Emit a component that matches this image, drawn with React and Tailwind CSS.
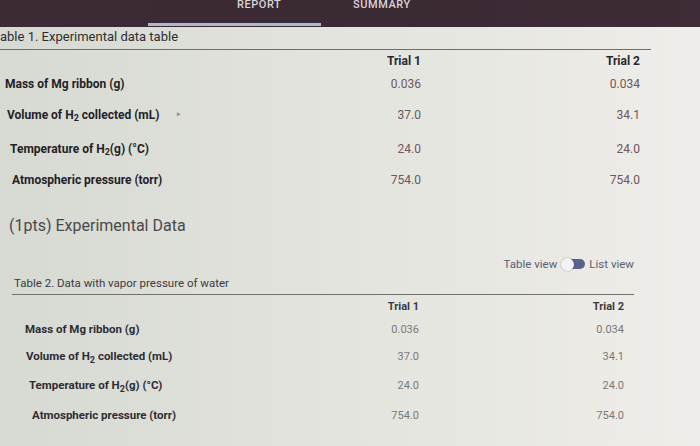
import React from "react";

const table1 = [
  { label: "Mass of Mg ribbon (g)", t1: "0.036", t2: "0.034", pl: "pl-[5px]", h: "h-[26px]" },
  { label: "Volume of H₂ collected (mL)", t1: "37.0", t2: "34.1", pl: "pl-[7px]", h: "h-[36px]", mark: true },
  { label: "Temperature of H₂(g) (°C)", t1: "24.0", t2: "24.0", pl: "pl-[10px]", h: "h-[32px]" },
  { label: "Atmospheric pressure (torr)", t1: "754.0", t2: "754.0", pl: "pl-[12px]", h: "h-[30px]" },
];

const table2 = [
  { label: "Mass of Mg ribbon (g)", t1: "0.036", t2: "0.034", pl: "pl-[25px]", h: "h-[24px]" },
  { label: "Volume of H₂ collected (mL)", t1: "37.0", t2: "34.1", pl: "pl-[26px]", h: "h-[30px]" },
  { label: "Temperature of H₂(g) (°C)", t1: "24.0", t2: "24.0", pl: "pl-[29px]", h: "h-[28px]" },
  { label: "Atmospheric pressure (torr)", t1: "754.0", t2: "754.0", pl: "pl-[32px]", h: "h-[32px]" },
];

function Label({ text }) {
  const parts = text.split("₂");
  if (parts.length === 1) return <>{text}</>;
  return (
    <>
      {parts[0]}
      <sub className="text-[9px]">2</sub>
      {parts[1]}
    </>
  );
}

export default function App() {
  return (
    <div
      className="w-[700px] h-[446px] overflow-hidden bg-gradient-to-r from-[#d6dad2] via-[#e3e4de] to-[#efede9] text-[#2e2a2e]"
      style={{ fontFamily: "Roboto, 'Liberation Sans', sans-serif" }}
    >
      {/* top tabs */}
      <div className="h-[27px] bg-gradient-to-r from-[#3d2b34] via-[#3a2a34] to-[#3e2b36] flex items-start pl-[148px]">
        <div className="w-[173px] h-full flex flex-col justify-between">
          <div className="pl-[89px] -mt-[3px] text-[11px] tracking-wider text-[#d9d3dc] font-medium">REPORT</div>
          <div className="h-[3px] bg-[#a9b9d2] mb-[1px]" />
        </div>
        <div className="ml-[32px] -mt-[3px] text-[11px] tracking-wider text-[#d9d3dc] font-medium">SUMMARY</div>
      </div>

      {/* table 1 */}
      <div className="pt-0 text-[13px] text-[#2f2c30]">able 1. Experimental data table</div>
      <div className="mt-[2px] w-[651px] h-[1px] bg-[#6f6e6e]" />
      <div className="flex items-center h-[20px] mt-[1px] text-[12px] font-bold text-[#2b2730]">
        <div className="w-[380px]" />
        <div className="w-[41px] text-right">Trial 1</div>
        <div className="w-[219px] text-right">Trial 2</div>
      </div>
      {table1.map((r) => (
        <div key={r.label} className={`flex items-center ${r.h} text-[12px]`}>
          <div className={`w-[380px] ${r.pl} font-bold text-[#231f26] flex items-center`}>
            <span className="w-[165px] whitespace-nowrap">
              <Label text={r.label} />
            </span>
            {r.mark && <span className="text-[7px] text-[#9a8f95] ml-[5px]">▸</span>}
          </div>
          <div className="w-[41px] text-right text-[#6e5560]">{r.t1}</div>
          <div className="w-[219px] text-right text-[#6e5560]">{r.t2}</div>
        </div>
      ))}

      {/* section heading */}
      <div className="mt-[19px] pl-[9px] text-[16px] text-[#4a474b]">(1pts) Experimental Data</div>

      <div className="mt-[18px] flex items-center justify-end pr-[66px] text-[11.5px] text-[#5a5e74]">
        <span>Table view</span>
        <span className="relative ml-[4px] mr-[4px] w-[24px] h-[11px] flex items-center">
          <span className="absolute right-0 w-[15px] h-[10px] rounded-r-full bg-[#5b6290]" />
          <span className="absolute left-0 w-[13px] h-[13px] rounded-full bg-[#f3f3f4] shadow-[0_0_2px_rgba(0,0,0,0.35)]" />
        </span>
        <span>List view</span>
      </div>

      {/* table 2 */}
      <div className="mt-[2px] pl-[14px] text-[11.5px] text-[#3c3a3e]">Table 2. Data with vapor pressure of water</div>
      <div className="mt-[2px] ml-[12px] w-[622px] h-[1px] bg-[#74726f]" />
      <div className="flex items-center h-[22px] mt-[1px] text-[11px] font-bold text-[#3b3a44]">
        <div className="w-[378px]" />
        <div className="w-[41px] text-right">Trial 1</div>
        <div className="w-[205px] text-right">Trial 2</div>
      </div>
      {table2.map((r) => (
        <div key={r.label} className={`flex items-center ${r.h} text-[11px]`}>
          <div className={`w-[378px] ${r.pl} font-bold text-[#2e2c33] whitespace-nowrap text-[11.5px]`}>
            <Label text={r.label} />
          </div>
          <div className="w-[41px] text-right text-[#7a7878]">{r.t1}</div>
          <div className="w-[205px] text-right text-[#7a7878]">{r.t2}</div>
        </div>
      ))}
    </div>
  );
}
